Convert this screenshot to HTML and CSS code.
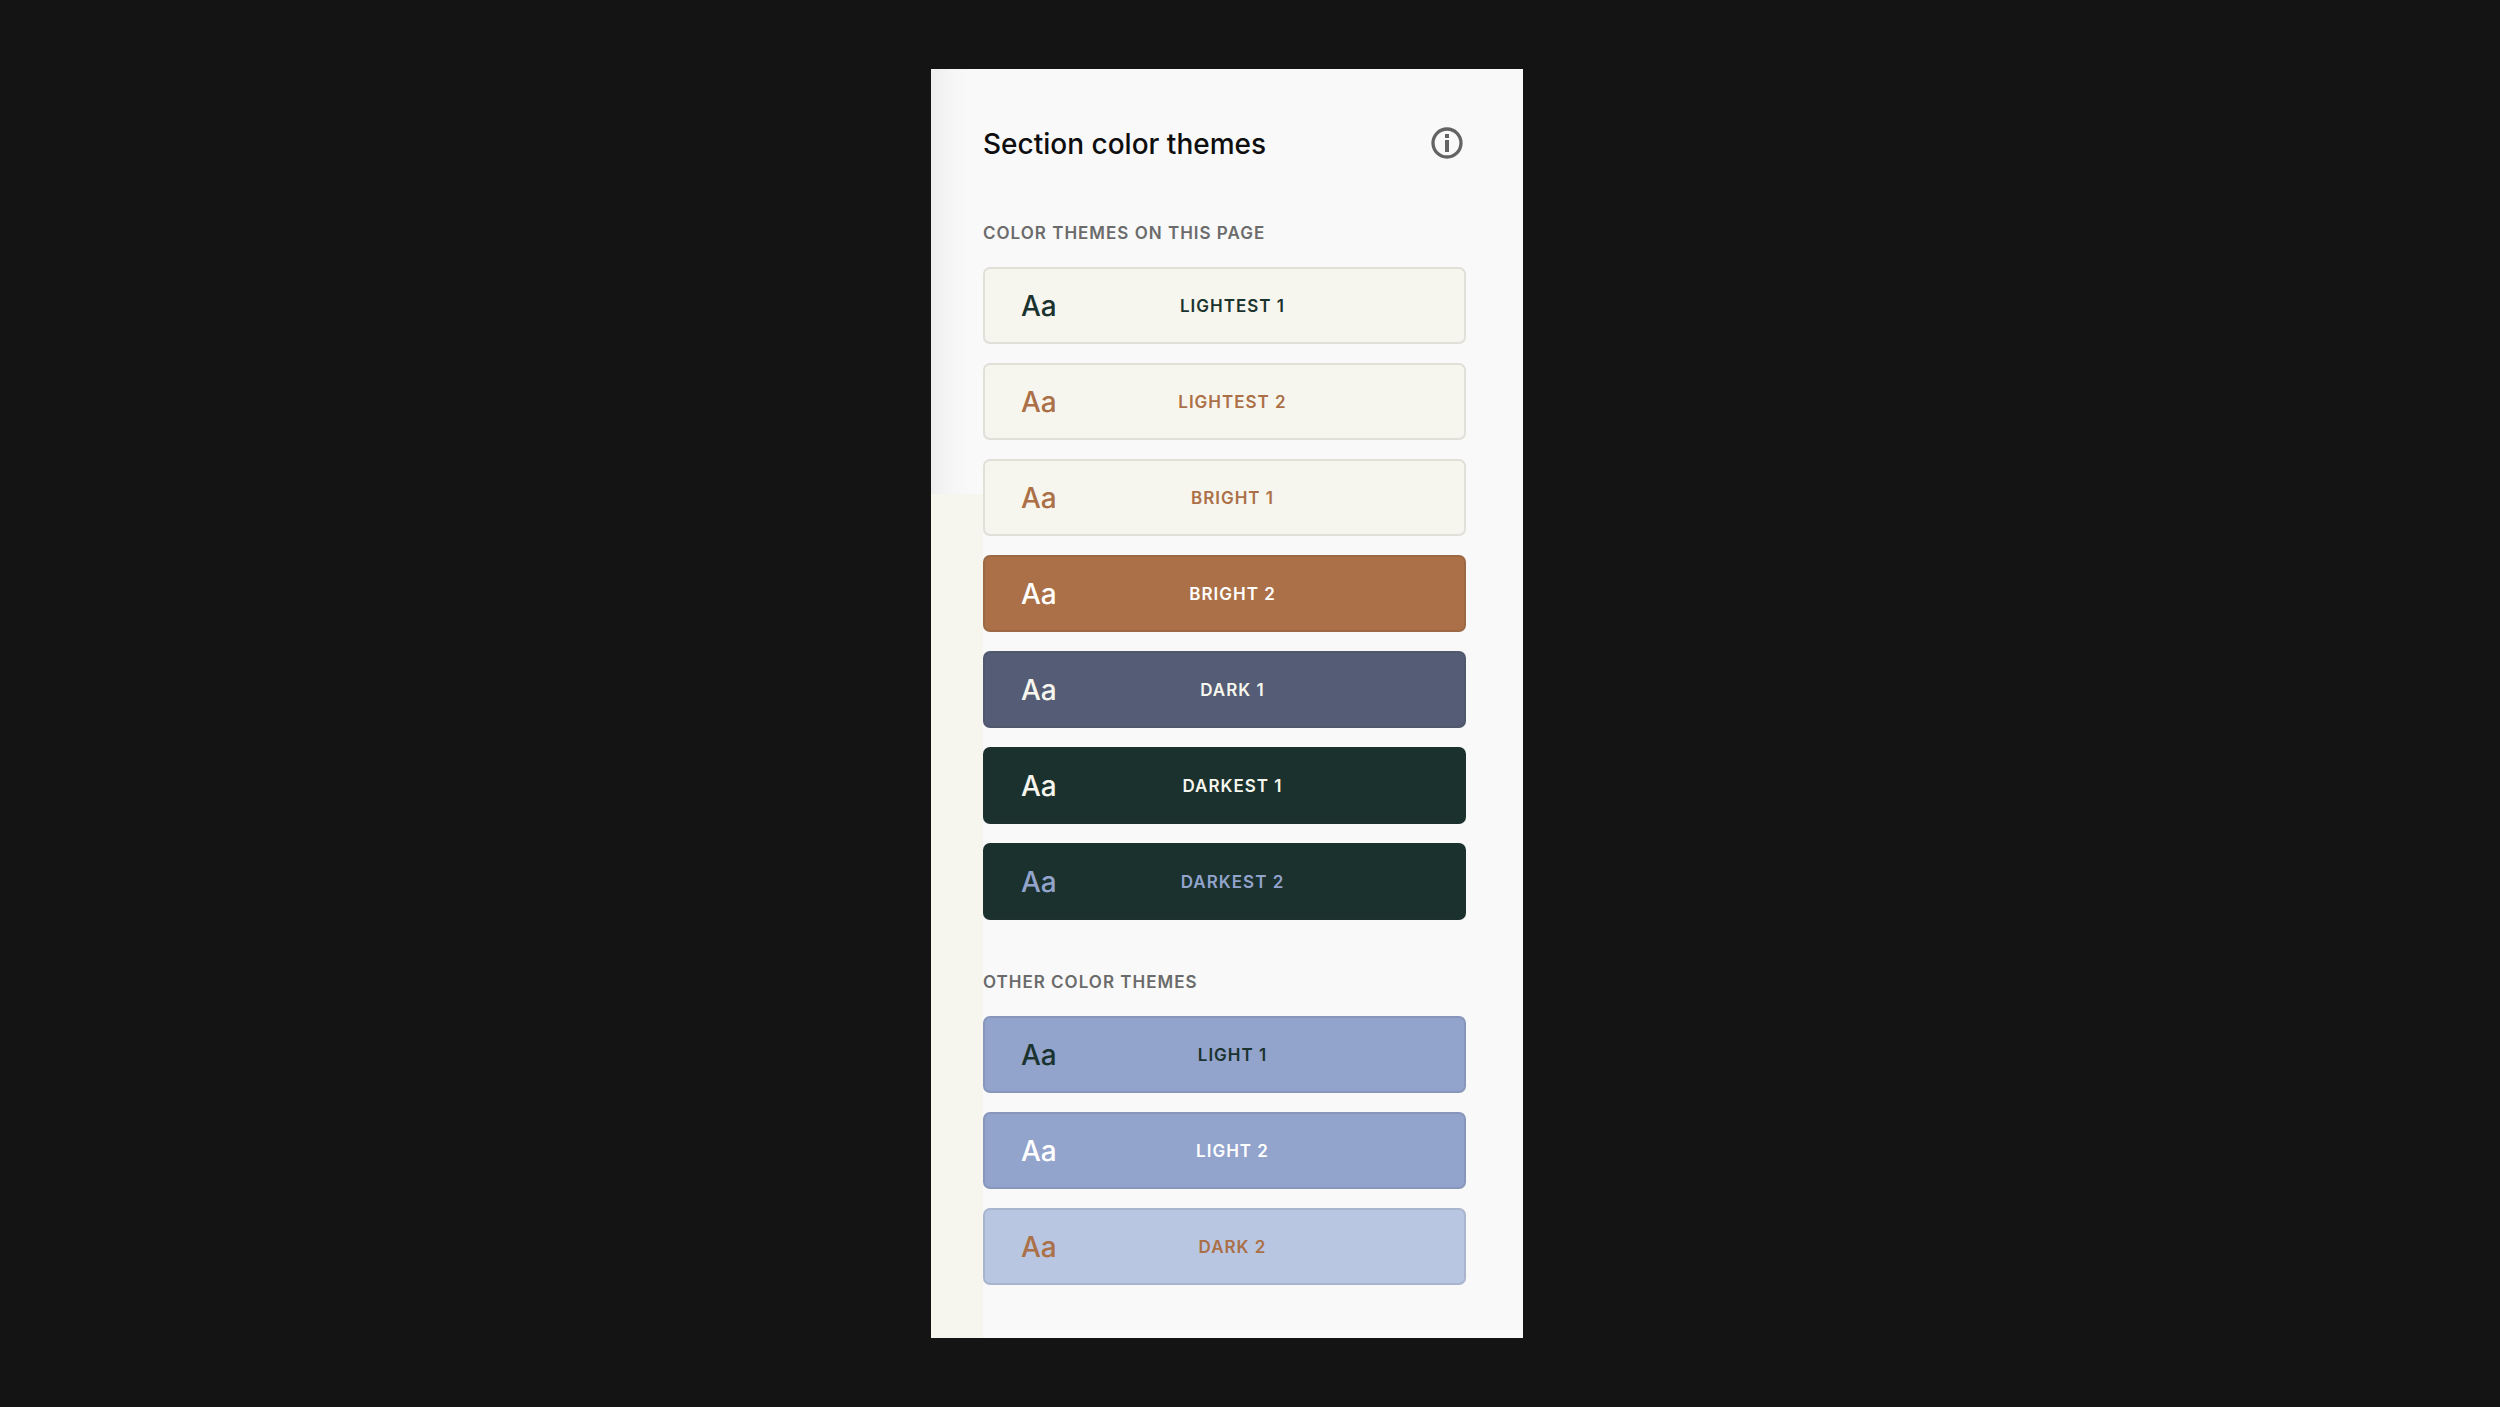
FILE: index.html
```html
<!DOCTYPE html>
<html lang="en">
<head>
<meta charset="utf-8">
<meta name="viewport" content="width=device-width, initial-scale=1">
<title>Section color themes</title>
<link rel="stylesheet" href="styles.css">
</head>
<body>
<main class="panel">
  <div class="preview" aria-hidden="true">
    <div class="preview-top"></div>
    <div class="preview-bottom"></div>
  </div>
  <div class="content">
    <header class="header">
      <h1 class="title">Section color themes</h1>
      <button class="info" type="button" aria-label="About section color themes">
        <svg width="34" height="34" viewBox="0 0 34 34">
          <circle cx="17" cy="16" r="14" fill="none" stroke="currentColor" stroke-width="3.300"/>
          <path d="M15 7h4v4h-4zM15 13h4v12h-4z" fill="currentColor"/>
        </svg>
      </button>
    </header>
    <section class="group">
      <h2 class="group-title">COLOR THEMES ON THIS PAGE</h2>
      <div class="themes">
        <button class="theme lightest-1" type="button"><span class="sample">Aa</span><span class="name">LIGHTEST 1</span></button>
        <button class="theme lightest-2" type="button"><span class="sample">Aa</span><span class="name">LIGHTEST 2</span></button>
        <button class="theme bright-1" type="button"><span class="sample">Aa</span><span class="name">BRIGHT 1</span></button>
        <button class="theme bright-2" type="button"><span class="sample">Aa</span><span class="name">BRIGHT 2</span></button>
        <button class="theme dark-1" type="button"><span class="sample">Aa</span><span class="name">DARK 1</span></button>
        <button class="theme darkest-1" type="button"><span class="sample">Aa</span><span class="name">DARKEST 1</span></button>
        <button class="theme darkest-2" type="button"><span class="sample">Aa</span><span class="name">DARKEST 2</span></button>
      </div>
    </section>
    <section class="group">
      <h2 class="group-title">OTHER COLOR THEMES</h2>
      <div class="themes">
        <button class="theme light-1" type="button"><span class="sample">Aa</span><span class="name">LIGHT 1</span></button>
        <button class="theme light-2" type="button"><span class="sample">Aa</span><span class="name">LIGHT 2</span></button>
        <button class="theme dark-2" type="button"><span class="sample">Aa</span><span class="name">DARK 2</span></button>
      </div>
    </section>
  </div>
</main>
</body>
</html>
```
FILE: styles.css
```css
* {
  box-sizing: border-box;
}

body {
  margin: 0;
  padding: 69px 0;
  display: grid;
  grid-template-columns: 931fr minmax(400px, 592fr) 977fr;
  background: #141414;
  font-family: Inter, "Liberation Sans", sans-serif;
}

.panel {
  grid-column: 2;
  display: grid;
  grid-template-columns: 52px 1fr;
  background: #f9f9f9;
}

.preview {
  display: flex;
  flex-direction: column;
}

.preview-top {
  flex: 425;
  background: linear-gradient(to right, #eeeeee, #f6f6f6 40%, #f9f9f9 80%);
}

.preview-bottom {
  flex: 844;
  background: #f7f6ee;
}

.content {
  display: flex;
  flex-direction: column;
  gap: 50px;
  padding: 55px 57px 53px 0;
}

.header {
  display: flex;
  align-items: center;
  justify-content: space-between;
  height: 40px;
  margin-bottom: 7px;
  padding-right: 2px;
}

.title {
  margin: 0;
  font-size: 28px;
  line-height: 40px;
  font-weight: 500;
  color: #0e0e0e;
}

.info {
  display: flex;
  padding: 0;
  border: 0;
  background: none;
  color: #636363;
}

.group {
  display: flex;
  flex-direction: column;
  gap: 22px;
}

.group-title {
  margin: 0;
  font-size: 17px;
  line-height: 24px;
  font-weight: 600;
  letter-spacing: 1px;
  color: #6b6b6b;
}

.themes {
  display: flex;
  flex-direction: column;
  gap: 19px;
}

.theme {
  display: grid;
  grid-template-columns: 1fr auto 1fr;
  align-items: center;
  height: 77px;
  padding: 0 20px 0 36px;
  border: 2px solid rgba(60, 60, 60, 0.12);
  border-radius: 7px;
  font-family: inherit;
  text-align: left;
}

.sample {
  font-size: 28px;
  line-height: 40px;
  font-weight: 500;
}

.name {
  font-size: 17px;
  line-height: 24px;
  font-weight: 600;
  letter-spacing: 1px;
}

.lightest-1 { background-color: #f7f6ee; color: #1b332e; }
.lightest-2 { background-color: #f7f6ee; color: #ab7047; }
.bright-1 { background-color: #f7f6ee; color: #ab7047; }
.bright-2 { background-color: #ab7047; color: #ffffff; }
.dark-1 { background-color: #545d75; color: #f7f6ee; }
.darkest-1 { background-color: #1a312d; color: #f7f6ee; }
.darkest-2 { background-color: #1a312d; color: #92a3cc; }
.light-1 { background-color: #92a3cc; color: #1b332e; }
.light-2 { background-color: #92a3cc; color: #ffffff; }
.dark-2 { background-color: #b9c6e2; color: #ab7047; }
```
